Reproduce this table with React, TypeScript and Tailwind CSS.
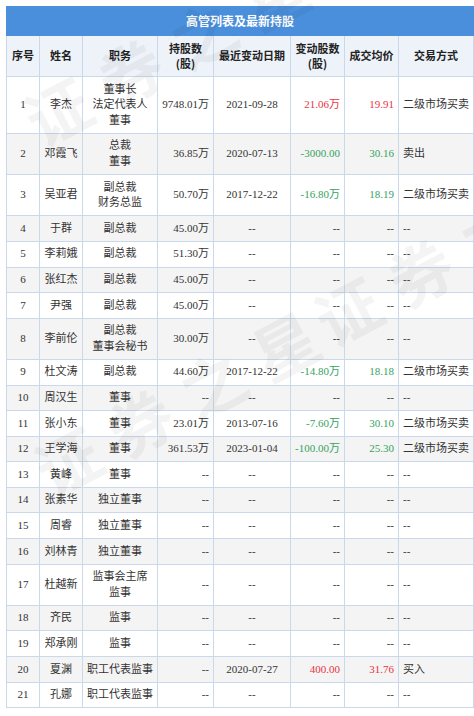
type Row = {
  no: number;
  name: string;
  roles: string[];
  shares: string;
  date: string;
  change: string;
  price: string;
  way: string;
  tone?: 'up' | 'down';
};

const rows: Row[] = [
  { no: 1, name: '李杰', roles: ['董事长', '法定代表人', '董事'], shares: '9748.01万', date: '2021-09-28', change: '21.06万', price: '19.91', way: '二级市场买卖', tone: 'up' },
  { no: 2, name: '邓霞飞', roles: ['总裁', '董事'], shares: '36.85万', date: '2020-07-13', change: '-3000.00', price: '30.16', way: '卖出', tone: 'down' },
  { no: 3, name: '吴亚君', roles: ['副总裁', '财务总监'], shares: '50.70万', date: '2017-12-22', change: '-16.80万', price: '18.19', way: '二级市场买卖', tone: 'down' },
  { no: 4, name: '于群', roles: ['副总裁'], shares: '45.00万', date: '--', change: '--', price: '--', way: '--' },
  { no: 5, name: '李莉娥', roles: ['副总裁'], shares: '51.30万', date: '--', change: '--', price: '--', way: '--' },
  { no: 6, name: '张红杰', roles: ['副总裁'], shares: '45.00万', date: '--', change: '--', price: '--', way: '--' },
  { no: 7, name: '尹强', roles: ['副总裁'], shares: '45.00万', date: '--', change: '--', price: '--', way: '--' },
  { no: 8, name: '李前伦', roles: ['副总裁', '董事会秘书'], shares: '30.00万', date: '--', change: '--', price: '--', way: '--' },
  { no: 9, name: '杜文涛', roles: ['副总裁'], shares: '44.60万', date: '2017-12-22', change: '-14.80万', price: '18.18', way: '二级市场买卖', tone: 'down' },
  { no: 10, name: '周汉生', roles: ['董事'], shares: '--', date: '--', change: '--', price: '--', way: '--' },
  { no: 11, name: '张小东', roles: ['董事'], shares: '23.01万', date: '2013-07-16', change: '-7.60万', price: '30.10', way: '二级市场买卖', tone: 'down' },
  { no: 12, name: '王学海', roles: ['董事'], shares: '361.53万', date: '2023-01-04', change: '-100.00万', price: '25.30', way: '二级市场买卖', tone: 'down' },
  { no: 13, name: '黄峰', roles: ['董事'], shares: '--', date: '--', change: '--', price: '--', way: '--' },
  { no: 14, name: '张素华', roles: ['独立董事'], shares: '--', date: '--', change: '--', price: '--', way: '--' },
  { no: 15, name: '周睿', roles: ['独立董事'], shares: '--', date: '--', change: '--', price: '--', way: '--' },
  { no: 16, name: '刘林青', roles: ['独立董事'], shares: '--', date: '--', change: '--', price: '--', way: '--' },
  { no: 17, name: '杜越新', roles: ['监事会主席', '监事'], shares: '--', date: '--', change: '--', price: '--', way: '--' },
  { no: 18, name: '齐民', roles: ['监事'], shares: '--', date: '--', change: '--', price: '--', way: '--' },
  { no: 19, name: '郑承刚', roles: ['监事'], shares: '--', date: '--', change: '--', price: '--', way: '--' },
  { no: 20, name: '夏渊', roles: ['职工代表监事'], shares: '--', date: '2020-07-27', change: '400.00', price: '31.76', way: '买入', tone: 'up' },
  { no: 21, name: '孔娜', roles: ['职工代表监事'], shares: '--', date: '--', change: '--', price: '--', way: '--' },
];

const cell = 'border border-[#c9d8ea] px-[4px] py-[4.5px]';
const head = 'border border-[#c9d8ea] px-[2px] py-[4.5px] text-center font-bold text-[#222]';

function toneClass(tone?: 'up' | 'down') {
  if (tone === 'up') return 'text-[#e8333f]';
  if (tone === 'down') return 'text-[#35a35f]';
  return '';
}

export default function App() {
  return (
    <div
      className="relative min-h-[716px] w-[474px] overflow-hidden bg-white pl-[6px] pt-[6px] text-[11px] leading-[15.6px] text-[#333]"
      style={{ fontFamily: '"Liberation Serif", "Noto Sans CJK SC", serif' }}
    >
      <table className="w-[467px] table-fixed border-collapse">
        <colgroup>
          <col className="w-[33px]" />
          <col className="w-[43px]" />
          <col className="w-[75px]" />
          <col className="w-[56px]" />
          <col className="w-[77px]" />
          <col className="w-[54px]" />
          <col className="w-[54px]" />
          <col className="w-[75px]" />
        </colgroup>
        <thead>
          <tr>
            <th
              colSpan={8}
              className="h-[29px] border border-[#4a8fdc] bg-[#4a8fdc] text-center text-[12px] font-bold text-white"
              style={{ fontFamily: '"Noto Sans CJK SC", sans-serif' }}
            >
              高管列表及最新持股
            </th>
          </tr>
          <tr className="bg-[#eef3fa]" style={{ fontFamily: '"Noto Sans CJK SC", sans-serif' }}>
            <th className={head}>序号</th>
            <th className={head}>姓名</th>
            <th className={head}>职务</th>
            <th className={head}>
              持股数
              <br />
              (股)
            </th>
            <th className={head}>最近变动日期</th>
            <th className={head}>
              变动股数
              <br />
              (股)
            </th>
            <th className={head}>成交均价</th>
            <th className={head}>交易方式</th>
          </tr>
        </thead>
        <tbody>
          {rows.map((r) => (
            <tr key={r.no} className={r.no % 2 === 0 ? 'bg-[#f4f4f4]' : 'bg-white'}>
              <td className={`${cell} text-center`}>{r.no}</td>
              <td className={`${cell} text-center`}>{r.name}</td>
              <td className={`${cell} text-center`}>
                {r.roles.map((role) => (
                  <div key={role}>{role}</div>
                ))}
              </td>
              <td className={`${cell} text-right`}>{r.shares}</td>
              <td className={`${cell} text-center`}>{r.date}</td>
              <td className={`${cell} text-right ${toneClass(r.tone)}`}>{r.change}</td>
              <td className={`${cell} text-right ${toneClass(r.tone)}`}>{r.price}</td>
              <td className={`${cell} text-left`}>{r.way}</td>
            </tr>
          ))}
        </tbody>
      </table>

      {/* watermark */}
      <div className="pointer-events-none absolute left-[10px] top-[40px] -rotate-[28deg] whitespace-nowrap text-[64px] font-bold tracking-[18px] text-black/[0.045]" style={{ fontFamily: '"Noto Sans CJK SC", sans-serif' }}>
        证券之星
      </div>
      <div className="pointer-events-none absolute left-[20px] top-[390px] -rotate-[28deg] whitespace-nowrap text-[64px] font-bold tracking-[18px] text-black/[0.045]" style={{ fontFamily: '"Noto Sans CJK SC", sans-serif' }}>
        证券之星
      </div>
      <div className="pointer-events-none absolute left-[300px] top-[240px] -rotate-[28deg] whitespace-nowrap text-[64px] font-bold tracking-[18px] text-black/[0.045]" style={{ fontFamily: '"Noto Sans CJK SC", sans-serif' }}>
        证券之星
      </div>
    </div>
  );
}
